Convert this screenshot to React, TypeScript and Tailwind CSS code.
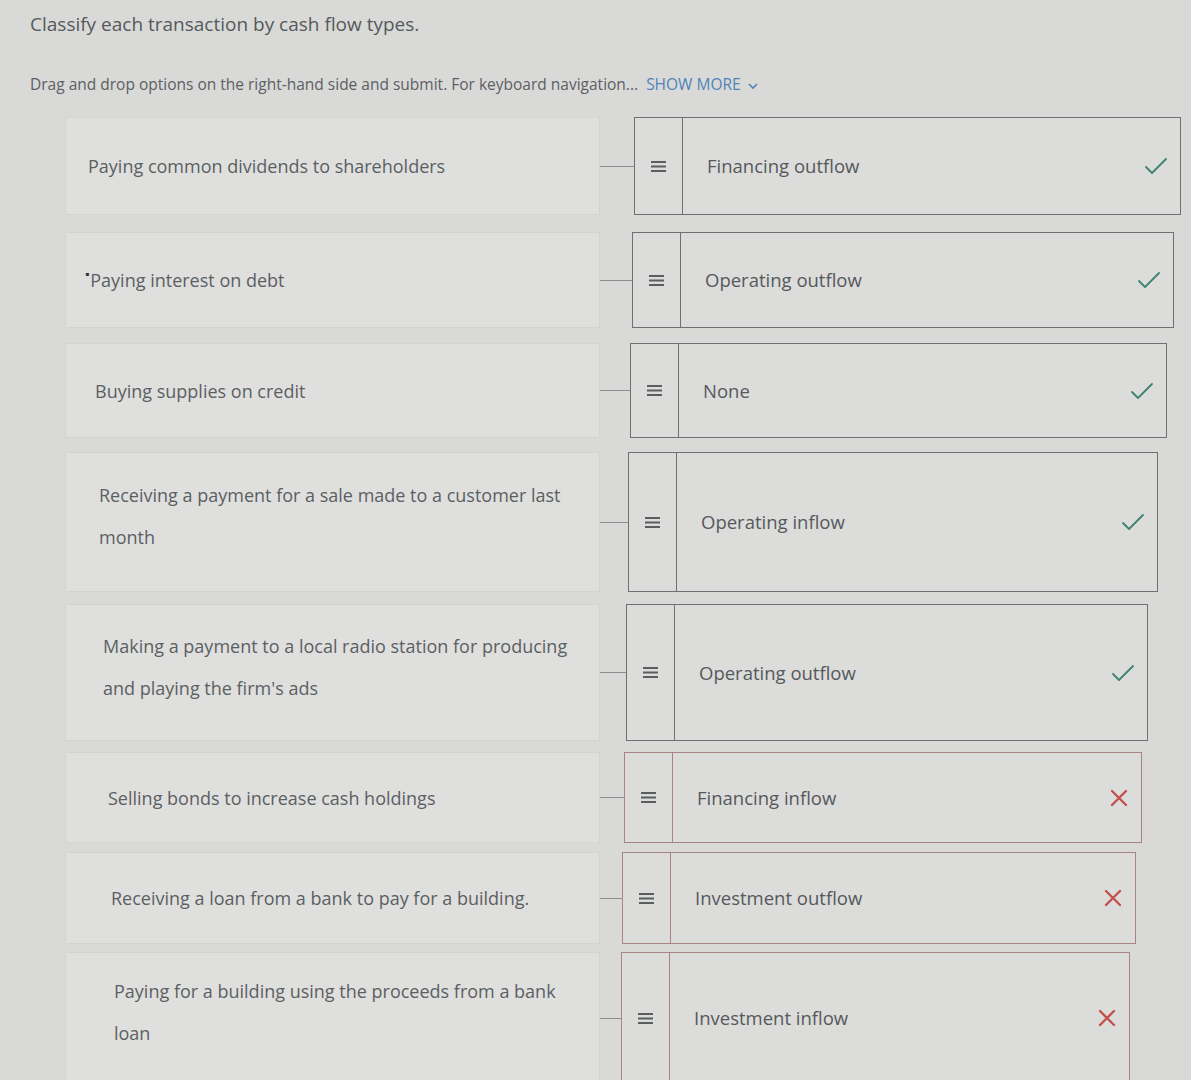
import React from 'react'

type Row = {
  text: string[]
  answer: string
  correct: boolean
  mt: string
  h: string
  pl: string
  conn: string
  box: string
  mark?: boolean
}

const ROWS: Row[] = [
  { text: ['Paying common dividends to shareholders'], answer: 'Financing outflow', correct: true, mt: 'mt-0', h: 'h-[98px]', pl: 'pl-[22px]', conn: 'w-[34px]', box: 'w-[547px]' },
  { text: ['Paying interest on debt'], answer: 'Operating outflow', correct: true, mt: 'mt-[17px]', h: 'h-[96px]', pl: 'pl-[19px]', conn: 'w-[32px]', box: 'w-[542px]', mark: true },
  { text: ['Buying supplies on credit'], answer: 'None', correct: true, mt: 'mt-[15px]', h: 'h-[95px]', pl: 'pl-[29px]', conn: 'w-[30px]', box: 'w-[537px]' },
  { text: ['Receiving a payment for a sale made to a customer last', 'month'], answer: 'Operating inflow', correct: true, mt: 'mt-[14px]', h: 'h-[140px]', pl: 'pl-[33px]', conn: 'w-[28px]', box: 'w-[530px]' },
  { text: ['Making a payment to a local radio station for producing', "and playing the firm's ads"], answer: 'Operating outflow', correct: true, mt: 'mt-[12px]', h: 'h-[137px]', pl: 'pl-[37px]', conn: 'w-[26px]', box: 'w-[522px]' },
  { text: ['Selling bonds to increase cash holdings'], answer: 'Financing inflow', correct: false, mt: 'mt-[11px]', h: 'h-[91px]', pl: 'pl-[42px]', conn: 'w-[24px]', box: 'w-[518px]' },
  { text: ['Receiving a loan from a bank to pay for a building.'], answer: 'Investment outflow', correct: false, mt: 'mt-[9px]', h: 'h-[92px]', pl: 'pl-[45px]', conn: 'w-[22px]', box: 'w-[514px]' },
  { text: ['Paying for a building using the proceeds from a bank', 'loan'], answer: 'Investment inflow', correct: false, mt: 'mt-[8px]', h: 'h-[132px]', pl: 'pl-[48px]', conn: 'w-[21px]', box: 'w-[509px]' },
]

function Handle() {
  return (
    <svg width="17" height="15" viewBox="0 0 17 15" className="text-[#5a5e61]">
      <path d="M1 3h15M1 7.5h15M1 12h15" stroke="currentColor" strokeWidth="2.2" />
    </svg>
  )
}

function Check() {
  return (
    <svg width="24" height="18" viewBox="0 0 24 18">
      <path d="M2 10l6 6L22 2" fill="none" stroke="#3d8470" strokeWidth="1.8" strokeLinecap="round" strokeLinejoin="round" />
    </svg>
  )
}

function Cross() {
  return (
    <svg width="20" height="20" viewBox="0 0 20 20">
      <path d="M3 3l14 14M17 3L3 17" fill="none" stroke="#c2514e" strokeWidth="2.4" strokeLinecap="round" />
    </svg>
  )
}

export default function App() {
  return (
    <div className="min-h-screen w-full overflow-hidden bg-[#d9d9d8] font-['Open_Sans','Noto_Sans',sans-serif] text-[#5a5d60]">
      <div className="pl-[30px] pt-[11px]">
        <h1 className="text-[19px] leading-[26px] text-[#55595c]">Classify each transaction by cash flow types.</h1>
        <p className="mt-[37px] text-[15.5px] leading-[20px] text-[#5c6063]">
          Drag and drop options on the right-hand side and submit. For keyboard navigation...{' '}
          <span className="ml-1 text-[#4f84b6]">SHOW MORE</span>
          <svg width="12" height="10" viewBox="0 0 12 10" className="ml-[6px] inline-block align-middle">
            <path d="M2 3l4 4 4-4" fill="none" stroke="#4f84b6" strokeWidth="1.6" />
          </svg>
        </p>
      </div>

      <div className="mt-[23px] flex flex-col pl-[65px]">
        {ROWS.map((r, i) => (
          <div key={i} className={`flex items-stretch ${r.mt} ${r.h}`}>
            <div
              className={`flex w-[535px] shrink-0 flex-col justify-center border border-[#d3d3d2] bg-[#dfdfde] ${r.pl} ${
                r.text.length > 1 ? 'pb-[12px]' : ''
              } text-[18px] leading-[42px] text-[#5b5f62]`}
            >
              {r.text.map((t, j) => (
                <div key={j}>
                  {r.mark && j === 0 ? <span className="mr-[1px] align-top text-[12px] leading-[30px] text-[#333]">▪</span> : null}
                  {t}
                </div>
              ))}
            </div>
            <div className={`flex shrink-0 items-center ${r.conn}`}>
              <div className="h-px w-full bg-[#8c8e90]" />
            </div>
            <div
              className={`flex shrink-0 items-stretch border bg-[#dcdcdb] ${r.box} ${
                r.correct ? 'border-[#6e7072]' : 'border-[#a88585]'
              }`}
            >
              <div
                className={`flex w-[48px] shrink-0 items-center justify-center border-r ${
                  r.correct ? 'border-[#6e7072]' : 'border-[#a88585]'
                }`}
              >
                <Handle />
              </div>
              <div className="flex flex-1 items-center pl-[24px] text-[18.5px] text-[#55595c]">{r.answer}</div>
              <div className="flex items-center pr-[12px]">{r.correct ? <Check /> : <Cross />}</div>
            </div>
          </div>
        ))}
      </div>
    </div>
  )
}
